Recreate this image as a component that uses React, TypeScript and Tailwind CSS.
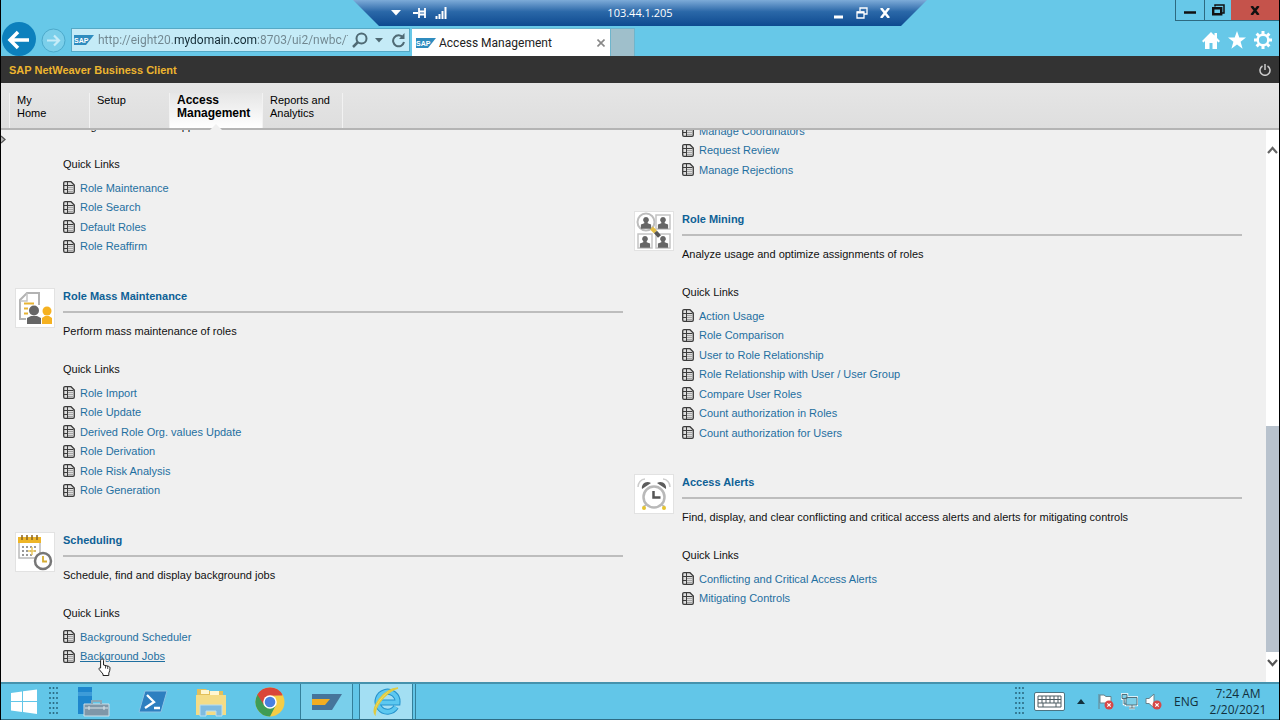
import React, { useState } from 'react';

const ListIcon: React.FC = () => (
  <svg width="12" height="13" viewBox="0 0 12 13" className="shrink-0">
    <path d="M2 .700h6l3.300 3.300V11a1.300 1.300 0 0 1-1.300 1.300H2A1.300 1.300 0 0 1 .7 11V2A1.300 1.300 0 0 1 2 .7z" fill="#dedede" stroke="#3c3c3c" strokeWidth="1.300" />
    <path d="M4.500 1v11M1 4.500h9.500M1 8.500h3.500" stroke="#3c3c3c" fill="none" />
    <path d="M5 6.500h5.500M5 8.500h5.500M5 10.500h5.500" stroke="#a5a5a5" fill="none" />
  </svg>
);

const SapLogo: React.FC = () => (
  <svg width="20" height="10" viewBox="0 0 20 10" className="shrink-0">
    <path d="M0 0h20l-8 10H0z" fill="#2f8cbf" />
    <text x="0" y="8" fontSize="7" fontWeight="bold" fill="#fff" fontFamily="Liberation Sans, sans-serif">SAP</text>
  </svg>
);

const person = 'M0-6a3.500 3.500 0 0 1 2 6.300v1.200l4 1.500V8H-6V3l4-1.500V.3A3.500 3.500 0 0 1 0-6z';

const MassIcon: React.FC = () => (
  <svg width="38" height="38" viewBox="0 0 38 38">
    <path d="M10 30H4V11l7-7h12v12" fill="none" stroke="#b3b3b3" strokeWidth="2" />
    <path d="M4 12h7V4" fill="none" stroke="#c4c4c4" strokeWidth="1.500" />
    <path d="M8 14.500h10M8 19.500h4M8 24.500h4" stroke="#e8b434" strokeWidth="2" />
    <circle cx="18" cy="21.500" r="5" fill="#666" />
    <path d="M11 35v-6l4-2h6l4 2v6z" fill="#666" />
    <circle cx="31" cy="22" r="4.500" fill="#f5b120" />
    <path d="M26 35v-6l3-2h4l3 2v6z" fill="#f5b120" />
  </svg>
);

const CalendarIcon: React.FC = () => (
  <svg width="38" height="38" viewBox="0 0 38 38">
    <path d="M3 5h21v20H3z" fill="#fff" stroke="#bbb" strokeWidth="1.500" />
    <path d="M2 4h23v6H2z" fill="#eeb526" />
    <path d="M6 2v5M11 2v5M16 2v5M21 2v5" stroke="#8a6520" strokeWidth="1.500" />
    <path d="M6 14h16M6 18h16M6 22h10" stroke="#999" strokeWidth="2" strokeDasharray="2 2" />
    <path d="M16 14v8M12 18h8" stroke="#ecca62" strokeWidth="1.500" />
    <circle cx="27" cy="28" r="8" fill="#fff" stroke="#777" strokeWidth="2.500" />
    <path d="M27 23v5.500h4" stroke="#d5ac30" fill="none" strokeWidth="1.800" />
  </svg>
);

const MiningIcon: React.FC = () => (
  <svg width="38" height="38" viewBox="0 0 38 38">
    <circle cx="11" cy="10" r="8.500" fill="#fff" stroke="#bdbdbd" strokeWidth="2" />
    <path d="M21 3h14v14H21zM3 22h14v14H3zM21 22h14v14H21z" fill="#fff" stroke="#c4c4c4" strokeWidth="1.500" />
    <g fill="#666">
      <path d={person} transform="translate(11 10) scale(.85)" />
      <path d={person} transform="translate(28 10) scale(.85)" />
      <path d={person} transform="translate(10 29) scale(.85)" />
      <path d={person} transform="translate(28 29) scale(.85)" />
    </g>
    <path d="M16.500 16l4 4" stroke="#e3bd45" strokeWidth="4" />
    <path d="M20.500 20l4 4.500" stroke="#555" strokeWidth="4" />
  </svg>
);

const AlarmIcon: React.FC = () => (
  <svg width="38" height="38" viewBox="0 0 38 38">
    <path d="M3 12c0-4 3-8 7-8M35 12c0-4-3-8-7-8" fill="none" stroke="#ccc" strokeWidth="1.500" />
    <path d="M7 14c-1-5 4-9 9-6zM31 14c1-5-4-9-9-6z" fill="#5c5c5c" />
    <path d="M8 32l3-2M30 32l-3-2" stroke="#bbb" strokeWidth="2" />
    <circle cx="19" cy="22" r="10.500" fill="#fff" stroke="#b9b9b9" strokeWidth="2.500" />
    <path d="M18.500 16v6.500h7" fill="none" stroke="#555" strokeWidth="2.500" />
    <circle cx="9" cy="33" r="2" fill="#e6c431" />
    <circle cx="29" cy="33" r="2" fill="#e6c431" />
  </svg>
);

const HandCursor: React.FC = () => (
  <svg width="14" height="19" viewBox="0 0 14 19" className="absolute top-3 left-[35px]">
    <path
      d="M4 1c1 0 1.500.6 1.500 1.500V7l5 1.300c1 .3 1.500.9 1.500 1.900 0 2-.4 3.300-1.200 4.800V17.500H5V16L1.200 11.500C.5 10.500 1.600 9.300 2.600 10V2.500C2.600 1.500 3.100 1 4 1z"
      fill="#fff"
      stroke="#222"
    />
    <path d="M7.500 7.500v3M9.700 8v3" stroke="#222" strokeWidth=".8" />
  </svg>
);

const QuickLinks: React.FC<{ links: string[]; hovered?: string }> = ({ links, hovered }) => (
  <ul className="mb-8">
    {links.map((link) => (
      <li key={link} className="relative flex items-center gap-[5px] odd:h-[19px] even:h-5">
        <ListIcon />
        <a href="#" className={link === hovered ? 'text-[#1f6fa0] underline' : 'text-[#1f6fa0]'}>
          {link}
        </a>
        {link === hovered && <HandCursor />}
      </li>
    ))}
  </ul>
);

interface SectionProps {
  icon: React.ReactNode;
  title: string;
  description: string;
  links: string[];
  hovered?: string;
}

const Section: React.FC<SectionProps> = ({ icon, title, description, links, hovered }) => (
  <section className="flex gap-2">
    <div className="flex h-10 w-10 shrink-0 items-center justify-center border border-[#e2e2e2] bg-white">{icon}</div>
    <div className="min-w-0 flex-1">
      <h2 className="font-bold">
        <a href="#" className="text-[#0e6196]">{title}</a>
      </h2>
      <div className="mt-[7px] border-t-2 border-[#bdbdbd]" />
      <p className="mt-[10px]">{description}</p>
      <h3 className="mt-[22px] mb-[6px]">Quick Links</h3>
      <QuickLinks links={links} hovered={hovered} />
    </div>
  </section>
);

const ConnectionBar: React.FC = () => (
  <div className="flex h-[26px] w-[574px] items-center bg-linear-to-b from-[#7dabd8] via-[#2a68a8] via-45% to-[#0d4a90] pr-9 pl-9 text-white [clip-path:polygon(0_0,100%_0,548px_100%,26px_100%)]">
    <button type="button" aria-label="Menu" className="-ml-1 flex w-4 justify-end">
      <svg width="10" height="6" viewBox="0 0 10 6"><path d="M0 0h10L5 5.500z" fill="#fff" /></svg>
    </button>
    <button type="button" aria-label="Pin" className="ml-3">
      <svg width="14" height="12" viewBox="0 0 14 12"><path d="M0 6h5M6 1v10M6 4.500h6M6 7.500h6M12 1v10" stroke="#fff" strokeWidth="1.800" fill="none" /></svg>
    </button>
    <svg width="12" height="12" viewBox="0 0 12 12" className="ml-2"><path d="M1.500 9v3M4.500 7v5M7.500 4v8M10.500 0v12" stroke="#fff" strokeWidth="2" /></svg>
    <span className="flex-1 pl-[35px] text-center font-['Open_Sans',sans-serif] text-[11px]">103.44.1.205</span>
    <div className="flex w-[93px] items-center justify-end gap-3 pr-px">
      <button type="button" aria-label="Minimize session">
        <svg width="10" height="12" viewBox="0 0 10 12"><path d="M0 10h9" stroke="#fff" strokeWidth="3" /></svg>
      </button>
      <button type="button" aria-label="Restore session">
        <svg width="12" height="12" viewBox="0 0 12 12"><path d="M4 4V1h7v6H8M1 5h7v6H1z" fill="none" stroke="#fff" strokeWidth="1.300" /><path d="M1 5.500h7" stroke="#fff" strokeWidth="2" /></svg>
      </button>
      <button type="button" aria-label="Close session">
        <svg width="10" height="10" viewBox="0 0 10 10"><path d="M1 0l8 10M9 0L1 10" stroke="#fff" strokeWidth="2.500" /></svg>
      </button>
    </div>
  </div>
);

const WindowControls: React.FC = () => (
  <div className="flex h-[21px] border-b border-l border-[#2d6a80]">
    <button type="button" aria-label="Minimize" className="flex w-[29px] items-center justify-center border-r border-[#2d6a80]">
      <svg width="12" height="10" viewBox="0 0 12 10"><path d="M0 7.500h12" stroke="#111" strokeWidth="2.500" /></svg>
    </button>
    <button type="button" aria-label="Restore" className="flex w-[26px] items-center justify-center">
      <svg width="13" height="12" viewBox="0 0 13 12"><path d="M3 2.500V1h9v8h-2" fill="none" stroke="#111" strokeWidth="1.500" /><path d="M1.200 4.200h8v6h-8z" fill="none" stroke="#111" strokeWidth="2.400" /></svg>
    </button>
    <button type="button" aria-label="Close" className="flex w-[48px] items-center justify-center bg-[#c5534b]">
      <svg width="10" height="9" viewBox="0 0 10 9"><path d="M1.500 0l7 9M8.500 0l-7 9" stroke="#111" strokeWidth="2.500" /></svg>
    </button>
  </div>
);

const BrowserBar: React.FC = () => {
  const [address, setAddress] = useState<string>('http://eight20.mydomain.com:8703/ui2/nwbc/7');

  return (
    <div className="flex h-7 font-['Roboto','Noto_Sans',sans-serif]">
      <button type="button" aria-label="Back" className="z-10 -mt-[6px] ml-px h-[34px] w-[34px] shrink-0">
        <svg width="34" height="34" viewBox="0 0 34 34"><circle cx="17" cy="17" r="17" fill="#0c80bd" /><path d="M27 18H9M16 10l-8 8 8 8" fill="none" stroke="#fff" strokeWidth="3.500" /></svg>
      </button>
      <button type="button" aria-label="Forward" className="ml-[5px] h-[25px] w-[25px] shrink-0">
        <svg width="25" height="25" viewBox="0 0 25 25"><circle cx="12.500" cy="12.500" r="11.500" fill="#7bcfea" stroke="#4ba9cb" /><path d="M6 12.500h12M13 7.500l5 5-5 5" fill="none" stroke="#c6ecf8" strokeWidth="2.200" /></svg>
      </button>
      <div className="ml-[5px] flex h-6 w-[339px] shrink-0 items-center border border-[#55a9c6] bg-[#c5ebf7] pl-[2px]">
        <SapLogo />
        <input
          type="text"
          aria-label="Address"
          value={address}
          onChange={(e) => setAddress(e.target.value)}
          className="ml-1 w-[250px] bg-[linear-gradient(to_right,#70868f_76px,#132b35_76px,#132b35_159px,#70868f_159px)] bg-clip-text text-[12px] text-transparent outline-none"
        />
        <button type="button" aria-label="Search" className="ml-1">
          <svg width="16" height="16" viewBox="0 0 16 16"><circle cx="9.500" cy="6.500" r="5" fill="none" stroke="#4f6a74" strokeWidth="2" /><path d="M6 10l-5 5" stroke="#4f6a74" strokeWidth="2.500" /></svg>
        </button>
        <button type="button" aria-label="Search options" className="ml-[7px]">
          <svg width="8" height="5" viewBox="0 0 8 5"><path d="M0 0h8L4 4.500z" fill="#4f6a74" /></svg>
        </button>
        <button type="button" aria-label="Refresh" className="ml-2">
          <svg width="15" height="15" viewBox="0 0 15 15"><path d="M12 4.500A5.500 5.500 0 1 0 13 9" fill="none" stroke="#4f6a74" strokeWidth="2" /><path d="M13.500 0v6H8z" fill="#4f6a74" /></svg>
        </button>
      </div>
      <div className="ml-[2px] flex w-[199px] items-center border-t border-r border-[#6fb5cc] bg-white pr-[5px] pl-1">
        <SapLogo />
        <a href="#" className="ml-[3px] flex-1 text-[12px] text-[#222]">Access Management</a>
        <button type="button" aria-label="Close tab">
          <svg width="8" height="8" viewBox="0 0 8 8"><path d="M.5.500l7 7M7.500.500l-7 7" stroke="#888" strokeWidth="1.600" /></svg>
        </button>
      </div>
      <button type="button" aria-label="New tab" className="w-6 border-t border-r border-[#6fb5cc] bg-[#9fbfcb]" />
      <div className="ml-auto flex items-center gap-2 pr-[7px] pb-1">
        <button type="button" aria-label="Home">
          <svg width="18" height="17" viewBox="0 0 18 17"><path d="M9 0L0 9l1.500 1.500L3 9v8h4.500v-6h3v6H15V9l1.500 1.500L18 9l-3-3V1h-2.500v2.500z" fill="#fff" /></svg>
        </button>
        <button type="button" aria-label="Favorites">
          <svg width="18" height="18" viewBox="0 0 18 18"><path d="M9 0l2.300 6.500H18l-5.400 4.200 2 7L9 13.500l-5.600 4.200 2-7L0 6.500h6.700z" fill="#fff" /></svg>
        </button>
        <button type="button" aria-label="Tools">
          <svg width="18" height="18" viewBox="0 0 18 18">
            <circle cx="9" cy="9" r="5.300" fill="none" stroke="#fff" strokeWidth="2.400" />
            <path d="M9 0v4M9 14v4M0 9h4M14 9h4M2.600 2.600l2.900 2.900M12.500 12.500l2.900 2.900M15.400 2.600l-2.900 2.900M5.500 12.500l-2.900 2.900" stroke="#fff" strokeWidth="3" />
          </svg>
        </button>
      </div>
    </div>
  );
};

const navTabs = [
  { lines: ['My', 'Home'], width: 'w-20' },
  { lines: ['Setup'], width: 'w-20' },
  { lines: ['Access', 'Management'], width: 'w-[93px]', active: true },
  { lines: ['Reports and', 'Analytics'], width: 'w-20' },
];

const NavBar: React.FC = () => (
  <nav className="flex h-[47px] shrink-0 border-b-2 border-[#b4b4b4] bg-linear-to-b from-[#e6e6e6] to-[#dedede] pl-2 leading-[13px]">
    {navTabs.map((tab) => (
      <a
        key={tab.lines[0]}
        href="#"
        className={`${tab.width} relative mt-[10px] block border-l border-[#f2f2f2] pt-px pl-[7px] text-black ${
          tab.active ? 'bg-linear-to-b from-[#e6e6e6] to-white text-[12px] font-bold' : ''
        }`}
      >
        {tab.lines.map((line) => (
          <span key={line} className="block">{line}</span>
        ))}
        {tab.active && (
          <svg width="12" height="6" viewBox="0 0 12 6" className="absolute bottom-[-2px] left-10"><path d="M0 6l6-6 6 6z" fill="#f0f0f0" /></svg>
        )}
      </a>
    ))}
    <div className="mt-[10px] border-l border-[#f2f2f2]" />
  </nav>
);

const ScrollBar: React.FC = () => (
  <div className="flex w-[13px] shrink-0 flex-col items-center bg-white">
    <button type="button" aria-label="Scroll up" className="mt-[14px] h-3">
      <svg width="11" height="8" viewBox="0 0 11 8"><path d="M1 7l4.500-5L10 7" fill="none" stroke="#666" strokeWidth="2.200" /></svg>
    </button>
    <div className="mt-[5px] flex w-full flex-1 items-end">
      <div className="h-[46%] w-full bg-[#b8c2cd]" />
    </div>
    <button type="button" aria-label="Scroll down" className="mt-[5px] mb-[13px] h-3">
      <svg width="11" height="8" viewBox="0 0 11 8"><path d="M1 1l4.500 5L10 1" fill="none" stroke="#555" strokeWidth="2.200" /></svg>
    </button>
  </div>
);

const Grip: React.FC = () => (
  <svg width="9" height="31" viewBox="0 0 9 31">
    <path d="M1 1v30M4.500 1v30M8 1v30" stroke="#2c6d85" strokeWidth="1.600" strokeDasharray="2 3" />
  </svg>
);

const ErrorBadge: React.FC = () => (
  <g>
    <circle cx="12" cy="12" r="4.500" fill="#d64848" />
    <path d="M10.300 10.300l3.400 3.400M13.700 10.300l-3.400 3.400" stroke="#fff" strokeWidth="1.200" />
  </g>
);

const TaskBar: React.FC = () => (
  <footer className="flex h-[38px] shrink-0 items-center border-t-2 border-b border-t-[#4592ad] border-b-[#2e6c84] bg-[#62c6e8] font-['Open_Sans','Noto_Sans',sans-serif] text-[#12303c]">
    <button type="button" aria-label="Start" className="ml-[10px]">
      <svg width="26" height="26" viewBox="0 0 26 26"><path d="M0 4l11-1.500V12H0zM12 2.300L26 .5V12H12zM0 13h11v10L0 21.500zM12 13h14v12l-14-2z" fill="#fff" /></svg>
    </button>
    <div className="ml-3"><Grip /></div>
    <button type="button" aria-label="Server Manager" className="ml-5">
      <svg width="32" height="31" viewBox="0 0 32 31">
        <path d="M0 1h14v27H0z" fill="#1e86cd" /><path d="M0 7h14M0 9h14" stroke="#5cb2e4" />
        <path d="M6 18h25v12H6z" fill="#7f97a8" stroke="#cfe0e8" /><path d="M14 18v-3h9v3" fill="none" stroke="#8ba7b6" strokeWidth="2" /><path d="M7 22h23M11 20v4M26 20v4" stroke="#dce7ec" />
      </svg>
    </button>
    <button type="button" aria-label="PowerShell" className="ml-7">
      <svg width="30" height="24" viewBox="0 0 30 24"><path d="M7 1h22l-6 21H1z" fill="#2e7fc0" stroke="#8cc4e6" /><path d="M9 5l7 7-9 6M16 18h6" fill="none" stroke="#fff" strokeWidth="2.300" /></svg>
    </button>
    <button type="button" aria-label="File Explorer" className="ml-[27px]">
      <svg width="32" height="30" viewBox="0 0 32 30">
        <path d="M2 2h9l2 2h15v24H2z" fill="#e3c05b" /><path d="M6 3h8v4H6zM15 4h9v4h-9z" fill="#fff6d0" />
        <path d="M1 8h30v20H1z" fill="#f4dc86" /><path d="M5 18h22v11h-6v-5H11v5H5z" fill="#7fbbe0" stroke="#b9dff3" />
      </svg>
    </button>
    <button type="button" aria-label="Chrome" className="ml-7">
      <svg width="30" height="30" viewBox="0 0 30 30">
        <circle cx="15" cy="15" r="14.500" fill="#f5cd46" />
        <path d="M15 15L2.440 7.750A14.500 14.500 0 0 1 27.560 7.750L15 8.500z" fill="#d9463a" />
        <path d="M2.440 7.750A14.500 14.500 0 0 0 15 29.500l5.700-11L15 15z" fill="#3f9c55" />
        <path d="M2.440 7.750L9 18l6-9.500h12.500A14.500 14.500 0 0 0 2.440 7.750z" fill="#d9463a" />
        <circle cx="15" cy="15" r="6.800" fill="#fff" /><circle cx="15" cy="15" r="5.300" fill="#4a80e0" />
      </svg>
    </button>
    <button type="button" aria-label="SAP Logon" className="ml-[15px] flex h-full w-[53px] items-center justify-center border-x border-[#347f9a] bg-[#79cfeb]">
      <svg width="30" height="16" viewBox="0 0 30 16"><path d="M0 0h30L20 16H0z" fill="#46749a" /><path d="M0 5h18l-5 6H0z" fill="#f2ad22" /></svg>
    </button>
    <button type="button" aria-label="Internet Explorer" className="ml-[6px] flex h-full w-[54px] items-center justify-center border-x border-[#347f9a] bg-[#a3dff3]">
      <svg width="30" height="31" viewBox="0 0 30 31">
        <path d="M25 21a10 10 0 1 1 1.500-4.500H9" fill="none" stroke="#2492cc" strokeWidth="6" />
        <path d="M25 21a10 10 0 1 1 1.500-4.500H9" fill="none" stroke="#5cc8f0" strokeWidth="4" />
        <path d="M4 28C0 22 12 3 27 2c-8 2-22 14-23 26z" fill="#f0e36a" stroke="#dfca42" strokeWidth="1.500" />
      </svg>
    </button>
    <div className="ml-[2px] h-full border-l border-[#347f9a]" />
    <div className="ml-auto flex h-full items-center pr-[11px]">
      <Grip />
      <button type="button" aria-label="Keyboard" className="ml-[10px]">
        <svg width="31" height="19" viewBox="0 0 31 19">
          <rect x=".5" y=".5" width="30" height="18" rx="1.500" fill="#fff" stroke="#4c7482" />
          <path d="M4 4h23v11H4zM4 7.500h23M4 11h23M8 4v7M12 4v7M16 4v7M20 4v7M24 4v7M9 11v4M22 11v4" fill="none" stroke="#4d5c62" />
        </svg>
      </button>
      <button type="button" aria-label="Show hidden icons" className="ml-3">
        <svg width="8" height="5" viewBox="0 0 8 5"><path d="M0 5l4-5 4 5z" fill="#12303c" /></svg>
      </button>
      <svg width="17" height="17" viewBox="0 0 17 17" className="ml-3"><path d="M2 16V1M3 2h4l2 1.500h5V10H3z" fill="#fff" stroke="#66828c" /><ErrorBadge /></svg>
      <svg width="17" height="17" viewBox="0 0 17 17" className="ml-[7px]"><path d="M5 4.500h11v7.500H5zM8 15h6M11 12v3M1 1.500h5v4H1zM3 5v6h2" fill="#7fcfe8" stroke="#fff" strokeWidth="2.500" /><path d="M5 4.500h11v7.500H5zM8 15h6M11 12v3M1 1.500h5v4H1zM3 5v6h2" fill="#7fcfe8" stroke="#53707b" /></svg>
      <svg width="17" height="17" viewBox="0 0 17 17" className="ml-[7px]"><path d="M1 5.500h3L9 1v14l-5-4.500H1z" fill="#fff" stroke="#66828c" /><ErrorBadge /></svg>
      <span className="ml-3 w-[26px] text-[12px]">ENG</span>
      <div className="ml-2 w-[60px] text-center text-[12px] leading-4 whitespace-nowrap">
        <div>7:24 AM</div>
        <div>2/20/2021</div>
      </div>
    </div>
  </footer>
);

const App: React.FC = () => {
  return (
    <div className="flex h-screen flex-col border-x border-black bg-[#f0f0f0] font-['Liberation_Sans',Arial,sans-serif] text-[11px] leading-4 text-[#111]">
      <header className="shrink-0 bg-[#67c8e8]">
        <div className="flex h-7 items-start">
          <div className="flex-1" />
          <ConnectionBar />
          <div className="flex flex-1 justify-end">
            <WindowControls />
          </div>
        </div>
        <BrowserBar />
      </header>

      <div className="flex h-[27px] shrink-0 items-center justify-between bg-[#333] pr-2 pl-2">
        <h1 className="font-bold text-[#edb52f]">SAP NetWeaver Business Client</h1>
        <button type="button" aria-label="Log off">
          <svg width="12" height="12" viewBox="0 0 12 12"><path d="M3.500 2A5 5 0 1 0 8.500 2M6 0v6" fill="none" stroke="#ccc" strokeWidth="1.500" /></svg>
        </button>
      </div>

      <NavBar />

      <div className="flex min-h-0 flex-1">
        <main className="relative grid flex-1 grid-cols-2 gap-[11px] overflow-hidden pr-6 pl-[14px]">
          <button type="button" aria-label="Expand panel" className="absolute top-[5px] left-0">
            <svg width="5" height="9" viewBox="0 0 5 9"><path d="M0 1l4 3.500L0 8" fill="#bbb" stroke="#555" strokeWidth="1.300" /></svg>
          </button>

          <div className="-mt-3">
            <div className="pl-12">
              <p>Manage roles and role approvals</p>
              <h3 className="mt-[22px] mb-[6px]">Quick Links</h3>
              <QuickLinks links={['Role Maintenance', 'Role Search', 'Default Roles', 'Role Reaffirm']} />
            </div>
            <Section
              icon={<MassIcon />}
              title="Role Mass Maintenance"
              description="Perform mass maintenance of roles"
              links={[
                'Role Import',
                'Role Update',
                'Derived Role Org. values Update',
                'Role Derivation',
                'Role Risk Analysis',
                'Role Generation',
              ]}
            />
            <Section
              icon={<CalendarIcon />}
              title="Scheduling"
              description="Schedule, find and display background jobs"
              links={['Background Scheduler', 'Background Jobs']}
              hovered="Background Jobs"
            />
          </div>

          <div className="-mt-[9px]">
            <div className="pl-12">
              <QuickLinks links={['Manage Coordinators', 'Request Review', 'Manage Rejections']} />
            </div>
            <Section
              icon={<MiningIcon />}
              title="Role Mining"
              description="Analyze usage and optimize assignments of roles"
              links={[
                'Action Usage',
                'Role Comparison',
                'User to Role Relationship',
                'Role Relationship with User / User Group',
                'Compare User Roles',
                'Count authorization in Roles',
                'Count authorization for Users',
              ]}
            />
            <Section
              icon={<AlarmIcon />}
              title="Access Alerts"
              description="Find, display, and clear conflicting and critical access alerts and alerts for mitigating controls"
              links={['Conflicting and Critical Access Alerts', 'Mitigating Controls']}
            />
          </div>
        </main>
        <ScrollBar />
      </div>

      <TaskBar />
    </div>
  );
};

export default App;
